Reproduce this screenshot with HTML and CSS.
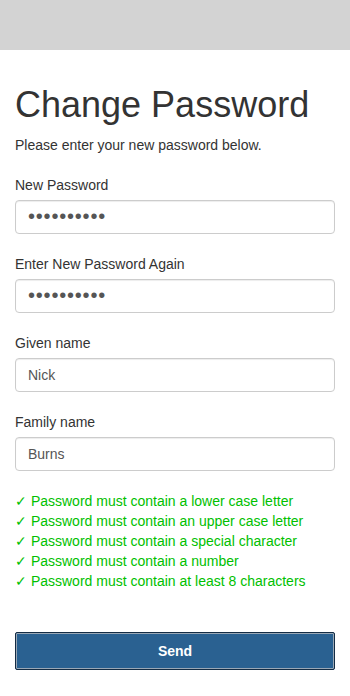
FILE: index.html
```html
<!DOCTYPE html>
<html lang="en">
<head>
    <meta charset="UTF-8">
    <title>Change Password</title>
    <link rel="stylesheet" href="styles.css">
</head>
<body>
<div class="top-bar"></div>
<div class="container">
    <h1>Change Password</h1>
    <p class="intro">Please enter your new password below.</p>
    <form>
        <div class="form-group">
            <label for="newPassword">New Password</label>
            <input type="password" id="newPassword" class="form-control" value="abcdefghij">
        </div>
        <div class="form-group">
            <label for="newPasswordAgain">Enter New Password Again</label>
            <input type="password" id="newPasswordAgain" class="form-control" value="abcdefghij">
        </div>
        <div class="form-group">
            <label for="givenName">Given name</label>
            <input type="text" id="givenName" class="form-control" value="Nick">
        </div>
        <div class="form-group">
            <label for="familyName">Family name</label>
            <input type="text" id="familyName" class="form-control" value="Burns">
        </div>
        <ul class="rules">
            <li>&#10003; Password must contain a lower case letter</li>
            <li>&#10003; Password must contain an upper case letter</li>
            <li>&#10003; Password must contain a special character</li>
            <li>&#10003; Password must contain a number</li>
            <li>&#10003; Password must contain at least 8 characters</li>
        </ul>
        <button type="button" class="send-btn">Send</button>
    </form>
</div>
</body>
</html>
```

FILE: styles.css
```css
body {
    font-family: "Liberation Sans", Arial, sans-serif;
    font-size: 14px;
    line-height: 20px;
    color: #333;
    margin: 0;
    padding: 0;
    background-color: #fff;
}
.top-bar {
    height: 50px;
    background-color: #d3d3d3;
}
.container {
    padding: 0 15px;
}
h1 {
    font-size: 36px;
    font-weight: normal;
    line-height: 1.1;
    margin: 35px 0 10px;
}
.intro {
    margin: 0 0 20px;
}
.form-group {
    margin-bottom: 20px;
}
.form-group label {
    display: block;
    margin-bottom: 5px;
}
.form-control {
    display: block;
    box-sizing: border-box;
    width: 100%;
    height: 34px;
    padding: 6px 12px;
    font-family: "Liberation Sans", Arial, sans-serif;
    font-size: 14px;
    color: #555;
    border: 1px solid #ccc;
    border-radius: 4px;
    box-shadow: inset 0 1px 1px rgba(0, 0, 0, 0.075);
}
.form-control[type="password"] {
    font-size: 20px;
    letter-spacing: 0.8px;
}
.rules {
    list-style: none;
    padding: 0;
    margin: 1px 0 41px;
    color: #00c000;
}
.rules li {
    line-height: 20px;
}
.send-btn {
    display: block;
    width: 100%;
    height: 38px;
    background-color: #2a6191;
    color: #fff;
    font-family: "Liberation Sans", Arial, sans-serif;
    font-size: 14px;
    font-weight: bold;
    border: 1px solid #142c44;
    border-radius: 2px;
    box-shadow: inset 0 0 0 1px #9aa8b6;
    cursor: pointer;
}
```
